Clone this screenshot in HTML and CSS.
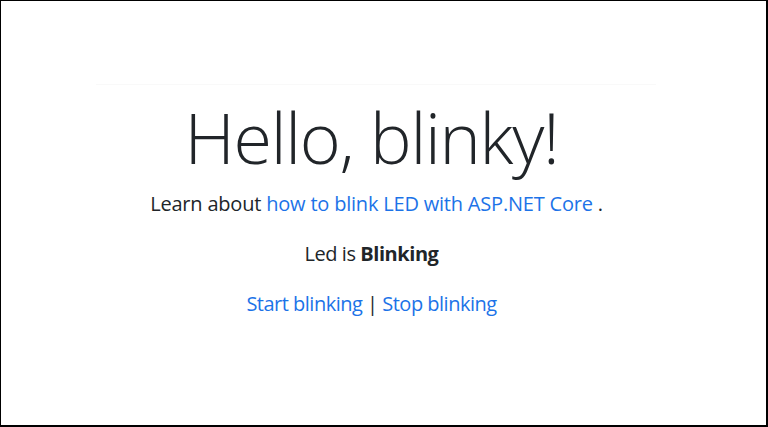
FILE: index.html
```html
<!DOCTYPE html>
<html lang="en">
<head>
<meta charset="utf-8">
<title>Hello, blinky!</title>
<link rel="stylesheet" href="styles.css">
</head>
<body>
<div class="frame">
  <div class="topline"></div>
  <main class="main">
    <h1 class="display">Hello, blinky!</h1>
    <p class="line learn">Learn about <a href="#">how to blink LED with ASP.NET Core</a> .</p>
    <p class="line status">Led is <b>Blinking</b></p>
    <p class="line actions"><a href="#">Start blinking</a> | <a href="#">Stop blinking</a></p>
  </main>
</div>
</body>
</html>
```
FILE: styles.css
```css
html, body {
  margin: 0;
  padding: 0;
  background: #fff;
}
* { box-sizing: border-box; }
.frame {
  width: 768px;
  height: 427px;
  border-top: 1px solid #000;
  border-left: 1px solid #000;
  border-right: 2px solid #000;
  border-bottom: 2px solid #000;
  font-family: "Open Sans", "Noto Sans", sans-serif;
  font-size: 20px;
  line-height: 1.5;
  color: #212529;
  overflow: hidden;
}
.topline {
  height: 1px;
  margin: 83px 110px 0 95px;
  background: #f9f9f9;
}
.main {
  text-align: center;
  padding-right: 24px;
  padding-top: 10px;
}
.display {
  font-size: 70px;
  font-weight: 300;
  line-height: 1.2;
  letter-spacing: -1.3px;
  margin: 0 0 10px;
}
.line {
  margin: 0 0 20px;
}
.learn {
  letter-spacing: -0.2px;
  padding-left: 10px;
}
.status {
  letter-spacing: -0.45px;
}
.actions {
  letter-spacing: -0.5px;
}
a {
  color: #1c73e8;
  text-decoration: none;
}
b { font-weight: 700; }
```
